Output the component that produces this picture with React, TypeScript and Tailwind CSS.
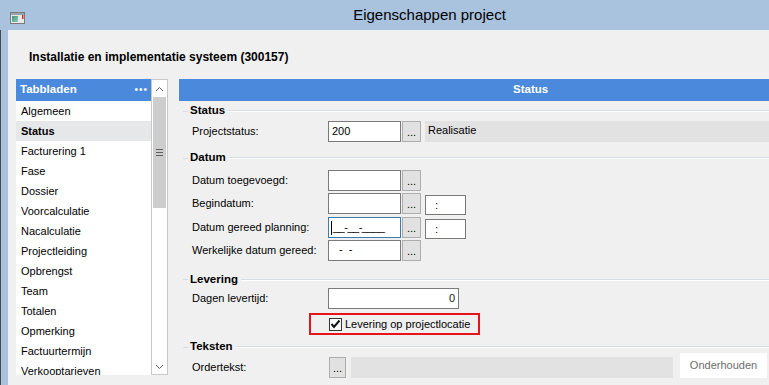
import React from "react";

const font = "font-['Liberation_Sans',Arial,sans-serif]";

const tabs = [
  "Algemeen",
  "Status",
  "Facturering 1",
  "Fase",
  "Dossier",
  "Voorcalculatie",
  "Nacalculatie",
  "Projectleiding",
  "Opbrengst",
  "Team",
  "Totalen",
  "Opmerking",
  "Factuurtermijn",
  "Verkooptarieven",
];

const SectionTitle = ({ title, className = "" }: { title: string; className?: string }) => (
  <div className={`flex items-center ${className}`}>
    <div className="ml-[6px] w-[5px] border-t border-[#d4dde6]" />
    <span className="ml-[2px] pr-[3px] text-[11.5px] font-bold text-black">{title}</span>
    <div className="flex-1 border-t border-b border-t-[#d4dde6] border-b-white" />
  </div>
);

const Dots = ({ className = "" }: { className?: string }) => (
  <div
    className={`h-[21px] w-[19px] bg-[#e1e1e1] border border-[#adadad] flex items-end justify-center pb-[3px] text-[11px] leading-none text-black ${className}`}
  >
    ...
  </div>
);

const Label = ({ children }: { children: React.ReactNode }) => (
  <div className="w-[151px] shrink-0 pl-[15px] text-[11px] text-black whitespace-nowrap">{children}</div>
);

const TimeBox = () => (
  <div className="ml-[4px] mt-[2px] h-[20px] w-[41px] bg-white border border-[#7a7a7a] pl-[9px] text-[11px] leading-[18px]">
    :
  </div>
);

const WindowIcon = () => (
  <svg width="15" height="12" viewBox="0 0 15 12">
    <rect x="0.5" y="0.5" width="14" height="11" fill="#e8e8e8" stroke="#7a7a7a" />
    <rect x="1" y="1" width="13" height="2" fill="#9aa4ad" />
    <defs>
      <linearGradient id="g" x1="0" y1="0" x2="1" y2="1">
        <stop offset="0" stopColor="#3f8f7f" />
        <stop offset="1" stopColor="#8fcfb0" />
      </linearGradient>
    </defs>
    <rect x="2" y="4" width="6" height="6" fill="url(#g)" />
    <rect x="12" y="3" width="1.5" height="4" fill="#d43030" />
  </svg>
);

export default function App() {
  return (
    <div className={`w-[769px] h-[385px] overflow-hidden bg-[#f0f0f0] flex flex-col ${font}`}>
      {/* title bar */}
      <div className="relative h-[30px] bg-[#a9c2dd] flex items-center justify-center shrink-0">
        <div className="absolute left-[10px] top-[12px]">
          <WindowIcon />
        </div>
        <span className="text-[15px] text-black ml-[90px]">Eigenschappen project</span>
      </div>

      <div className="flex flex-1 min-h-0">
        <div className="w-[1px] bg-[#4a4a4a]" />
        <div className="w-[7px] bg-[#a9c2dd]" />

        <div className="flex-1 flex flex-col min-w-0">
          <div className="pt-[19px] pb-[14px] pl-[21px] text-[12px] leading-[16px] font-bold text-black">
            Installatie en implementatie systeem (300157)
          </div>

          <div className="flex">
            {/* sidebar */}
            <div className="ml-[8px] flex h-[296px]">
              <div className="w-[135px] bg-white flex flex-col overflow-hidden">
                <div className="h-[22px] shrink-0 bg-[#4a89dc] flex items-center justify-between pl-[4px] pr-[3px]">
                  <span className="text-[11.5px] font-bold text-white">Tabbladen</span>
                  <span className="text-white text-[10px] tracking-[1px] leading-none">•••</span>
                </div>
                {tabs.map((t) => (
                  <div
                    key={t}
                    className={`h-[20px] shrink-0 flex items-center pl-[5px] text-[11px] text-black ${
                      t === "Status" ? "bg-[#e6e7e9] font-bold" : ""
                    }`}
                  >
                    {t}
                  </div>
                ))}
              </div>
              <div className="w-[17px] bg-white border border-[#c8c8c8] flex flex-col">
                <div className="h-[17px] flex items-center justify-center">
                  <svg width="9" height="6" viewBox="0 0 9 6">
                    <path d="M1 5 L4.5 1.5 L8 5" fill="none" stroke="#606060" strokeWidth="1" />
                  </svg>
                </div>
                <div className="h-[111px] mx-[1px] bg-[#cdcdcd] flex flex-col items-center justify-center gap-[2px]">
                  <div className="w-[7px] h-[1px] bg-[#606060]" />
                  <div className="w-[7px] h-[1px] bg-[#606060]" />
                  <div className="w-[7px] h-[1px] bg-[#606060]" />
                </div>
                <div className="flex-1" />
                <div className="h-[15px] flex items-center justify-center">
                  <svg width="9" height="6" viewBox="0 0 9 6">
                    <path d="M1 1 L4.5 4.5 L8 1" fill="none" stroke="#606060" strokeWidth="1" />
                  </svg>
                </div>
              </div>
            </div>

            {/* right panel */}
            <div className="ml-[9px] flex-1 flex flex-col min-w-0">
              <div className="ml-[2px] h-[22px] bg-[#4a89dc] flex items-center pl-[334px]">
                <span className="text-[11.5px] font-bold text-white">Status</span>
              </div>

              <SectionTitle title="Status" className="h-[20px]" />
              <div className="flex items-center h-[21px]">
                <Label>Projectstatus:</Label>
                <div className="h-[21px] w-[73px] bg-white border border-[#7a7a7a] pl-[3px] text-[11px] leading-[19px]">200</div>
                <Dots className="ml-[1px]" />
                <div className="ml-[4px] flex-1 h-[21px] bg-[#e2e2e2] pl-[3px] text-[11px] leading-[19px]">Realisatie</div>
              </div>

              <SectionTitle title="Datum" className="h-[20px] mt-[6px]" />
              <div className="flex items-center h-[21px] mt-[2px]">
                <Label>Datum toegevoegd:</Label>
                <div className="h-[21px] w-[73px] bg-white border border-[#7a7a7a]" />
                <Dots className="ml-[1px]" />
              </div>
              <div className="flex items-start h-[21px] mt-[2px]">
                <Label>
                  <div className="leading-[21px]">Begindatum:</div>
                </Label>
                <div className="h-[21px] w-[73px] bg-white border border-[#7a7a7a]" />
                <Dots className="ml-[1px]" />
                <TimeBox />
              </div>
              <div className="flex items-start h-[21px] mt-[3px]">
                <Label>
                  <div className="leading-[21px]">Datum gereed planning:</div>
                </Label>
                <div className="h-[21px] w-[73px] bg-white border border-[#3d7bad] pl-[2px] flex items-center text-[11px]">
                  <div className="w-[1px] h-[14px] bg-black mr-[1px]" />
                  <span className="tracking-[-0.5px]">__-__-____</span>
                </div>
                <Dots className="ml-[1px]" />
                <TimeBox />
              </div>
              <div className="flex items-center h-[21px] mt-[2px]">
                <Label>Werkelijke datum gereed:</Label>
                <div className="h-[21px] w-[73px] bg-white border border-[#7a7a7a] pl-[10px] text-[11px] leading-[17px] whitespace-pre">
                  -  -
                </div>
                <Dots className="ml-[1px]" />
              </div>

              <SectionTitle title="Levering" className="h-[17px] mt-[10px]" />
              <div className="flex items-center h-[21px]">
                <Label>Dagen levertijd:</Label>
                <div className="h-[21px] w-[131px] bg-white border border-[#7a7a7a] pr-[3px] text-right text-[11px] leading-[19px] text-[#202020]">
                  0
                </div>
              </div>
              <div className="mt-[4px] ml-[132px] h-[22px] w-[171px] border-2 border-[#e8141c] flex items-center pl-[18px]">
                <div className="w-[13px] h-[13px] bg-white border border-[#333] flex items-center justify-center">
                  <svg width="11" height="10" viewBox="0 0 11 10">
                    <path d="M1.5 5 L4 8 L9.5 1.5" fill="none" stroke="#111" strokeWidth="2" />
                  </svg>
                </div>
                <span className="ml-[3px] text-[11px] text-black whitespace-nowrap">Levering op projectlocatie</span>
              </div>

              <SectionTitle title="Teksten" className="h-[20px] mt-[2px]" />
              <div className="flex items-end h-[21px]">
                <div className="self-center">
                  <Label>Ordertekst:</Label>
                </div>
                <div className="ml-[1px] h-[21px] w-[17px] bg-[#e1e1e1] border border-[#adadad] flex items-end justify-center pb-[3px] text-[11px] leading-none">
                  ...
                </div>
                <div className="ml-[5px] h-[21px] w-[322px] bg-[#e2e2e2]" />
                <div className="ml-[7px] h-[25px] w-[87px] shrink-0 bg-white flex items-center justify-center text-[11px] text-[#6d6d6d]">
                  Onderhouden
                </div>
              </div>
            </div>
          </div>
        </div>
      </div>
    </div>
  );
}
